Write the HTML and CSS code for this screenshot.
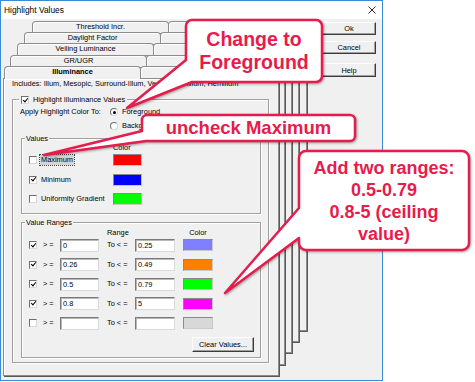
FILE: index.html
```html
<!DOCTYPE html>
<html>
<head>
<meta charset="utf-8">
<title>Highlight Values</title>
<link rel="stylesheet" href="styles.css">
</head>
<body>
<div class="stage">
  <div class="window">
    <div class="titlebar">
      <span class="title">Highlight Values</span>
      <svg class="close" viewBox="0 0 8 8" width="8" height="8"><path d="M0.5 0.5 L7.5 7.5 M7.5 0.5 L0.5 7.5" stroke="#111" stroke-width="0.9" fill="none"/></svg>
    </div>
    <div class="client">
      <div class="notebook">
        <div class="layer l4">
          <div class="tabs"><div class="tab">Threshold Incr.</div><div class="tab"></div></div>
          <div class="panel"></div>
        </div>
        <div class="layer l3">
          <div class="tabs"><div class="tab">Daylight Factor</div><div class="tab"></div></div>
          <div class="panel"></div>
        </div>
        <div class="layer l2">
          <div class="tabs"><div class="tab">Veiling Luminance</div><div class="tab"></div></div>
          <div class="panel"></div>
        </div>
        <div class="layer l1">
          <div class="tabs"><div class="tab">GR/UGR</div><div class="tab"></div></div>
          <div class="panel"></div>
        </div>
        <div class="layer l0">
          <div class="tabs"><div class="tab active">Illuminance</div><div class="tab"></div></div>
          <div class="panel front">
            <div class="includes">Includes: Illum, Mesopic, Surround-Illum, Vertan, Semillum, Hemillum</div>
            <div class="group outer">
              <div class="legend"><span class="cb on"></span><span>Highlight Illuminance Values</span></div>
              <div class="apply">
                <span class="apply-label">Apply Highlight Color To:</span>
                <div class="radios">
                  <div class="ropt"><span class="radio on"></span><span>Foreground</span></div>
                  <div class="ropt"><span class="radio"></span><span>Background</span></div>
                </div>
              </div>
              <div class="group values">
                <div class="glabel">Values</div>
                <div class="color-head">Color</div>
                <div class="vrows">
                  <div class="chk"><span class="cb"></span><span class="focus">Maximum</span></div>
                  <div class="swatch red"></div>
                  <div class="chk"><span class="cb on"></span><span>Minimum</span></div>
                  <div class="swatch blue"></div>
                  <div class="chk"><span class="cb"></span><span>Uniformity Gradient</span></div>
                  <div class="swatch green"></div>
                </div>
              </div>
              <div class="group ranges">
                <div class="glabel">Value Ranges</div>
                <div class="rhead"><span class="rh-range">Range</span><span class="rh-color">Color</span></div>
                <div class="rgrid">
                  <span class="cb on"></span><span class="op">&gt; =</span><div class="field">0</div><span class="op">To &lt; =</span><div class="field wide">0.25</div><div class="swatch sw-r lav"></div>
                  <span class="cb on"></span><span class="op">&gt; =</span><div class="field">0.26</div><span class="op">To &lt; =</span><div class="field wide">0.49</div><div class="swatch sw-r orange"></div>
                  <span class="cb on"></span><span class="op">&gt; =</span><div class="field">0.5</div><span class="op">To &lt; =</span><div class="field wide">0.79</div><div class="swatch sw-r green"></div>
                  <span class="cb on"></span><span class="op">&gt; =</span><div class="field">0.8</div><span class="op">To &lt; =</span><div class="field wide">5</div><div class="swatch sw-r magenta"></div>
                  <span class="cb"></span><span class="op">&gt; =</span><div class="field"></div><span class="op">To &lt; =</span><div class="field wide"></div><div class="swatch sw-r empty"></div>
                </div>
                <div class="btn clear">Clear Values...</div>
              </div>
            </div>
          </div>
        </div>
      </div>
      <div class="buttons">
        <div class="btn side">Ok</div>
        <div class="btn side">Cancel</div>
        <div class="btn side help">Help</div>
      </div>
    </div>
  </div>

  <svg class="callouts" width="475" height="382" viewBox="0 0 475 382">
    <path class="co" d="M192 20 H316 A6 6 0 0 1 322 26 V76 A6 6 0 0 1 316 82 H192 L127 108 L186 60 V26 A6 6 0 0 1 192 20 Z"/>
    <path class="co" d="M147 115 H350 A5 5 0 0 1 355 120 V136 A5 5 0 0 1 350 141 H146 L44 155 L142 131 V120 A5 5 0 0 1 147 115 Z"/>
    <path class="co" d="M306 151 H462 A7 7 0 0 1 469 158 V243 A7 7 0 0 1 462 250 H306 A7 7 0 0 1 299 243 V238 L225 293 L299 208 V158 A7 7 0 0 1 306 151 Z"/>
  </svg>
  <div class="ctext c1">Change to<br>Foreground</div>
  <div class="ctext c2">uncheck Maximum</div>
  <div class="ctext c3">Add two ranges:<br>0.5-0.79<br>0.8-5 (ceiling<br>value)</div>
</div>
</body>
</html>
```

FILE: styles.css
```css
* { box-sizing: border-box; }
html, body { margin: 0; padding: 0; background: #ffffff; }
body {
  font-family: "Liberation Sans", Arial, sans-serif;
  font-size: 7.4px;
  color: #000;
}
.stage { position: relative; width: 475px; height: 382px; overflow: hidden; }

/* window */
.window {
  width: 383px;
  height: 381px;
  border: 1px solid #3b8ad6;
  background: #f0f0f0;
  display: flex;
  flex-direction: column;
}
.titlebar {
  height: 18px;
  flex: none;
  background: #fff;
  display: flex;
  align-items: center;
  justify-content: space-between;
  padding: 0 6px 0 3px;
}
.title { font-size: 8.4px; color: #000; }
.close { display: block; }

.client { display: flex; padding-left: 2px; }
.notebook { position: relative; width: 304px; height: 357px; flex: none; }

/* stacked pages */
.layer {
  position: absolute;
  width: 276px;
  height: 310px;
  display: flex;
  flex-direction: column;
}
.l0 { left: 0; top: 47px; }
.l1 { left: 6px; top: 36px; }
.l2 { left: 13px; top: 24px; }
.l3 { left: 20px; top: 13px; }
.l4 { left: 28px; top: 2px; }

.tabs { display: flex; height: 12px; padding-left: 1px; flex: none; }
.tab {
  width: 137px;
  height: 12px;
  border: 1px solid #8c8c8c;
  border-bottom: none;
  border-radius: 4px 4px 0 0;
  background: #f0f0f0;
  box-shadow: inset 1px 1px 0 #ffffff;
  text-align: center;
  line-height: 10px;
  white-space: nowrap;
}
.tab + .tab { margin-left: -1px; }
.tab.active {
  height: 13px;
  margin-bottom: -1px;
  position: relative;
  z-index: 2;
  font-weight: bold;
}
.panel {
  flex: 1;
  background: #f0f0f0;
  border: 1px solid #8c8c8c;
  box-shadow: 1px 1px 0 #5a5a5a, inset 1px 1px 0 #ffffff;
}
.panel.front { padding: 0 0 0 8px; display: flex; flex-direction: column; align-items: flex-start; }
.includes { line-height: 10px; white-space: nowrap; }

/* group boxes */
.group {
  border: 1px solid #a0a0a0;
  box-shadow: inset 1px 1px 0 #ffffff, 1px 1px 0 #ffffff;
  position: relative;
  flex: none;
}
.outer { margin-top: 10px; width: 257px; height: 264px; display: flex; flex-direction: column; align-items: flex-start; }
.legend {
  position: absolute;
  top: -5px;
  left: 6px;
  padding: 0 2px;
  background: #f0f0f0;
  display: flex;
  align-items: center;
  gap: 4px;
  line-height: 10px;
  white-space: nowrap;
}
.glabel {
  position: absolute;
  top: -5px;
  left: 3px;
  padding: 0 1px;
  background: #f0f0f0;
  line-height: 10px;
  white-space: nowrap;
}
.apply { display: flex; margin-top: 7px; padding-left: 7px; }
.apply-label { width: 90px; line-height: 10px; white-space: nowrap; }
.radios { display: flex; flex-direction: column; gap: 4px; }
.ropt { display: flex; align-items: center; gap: 4px; line-height: 10px; white-space: nowrap; }

/* checkbox / radio */
.cb {
  display: inline-block;
  position: relative;
  width: 8px;
  height: 8px;
  flex: none;
  border: 1px solid;
  border-color: #6e6e6e #d8d8d8 #d8d8d8 #6e6e6e;
  background: #ffffff;
}
.cb.on::after {
  content: "";
  position: absolute;
  left: 1.5px;
  top: -0.5px;
  width: 2px;
  height: 4px;
  border: solid #000;
  border-width: 0 1.3px 1.3px 0;
  transform: rotate(40deg);
}
.radio {
  display: inline-block;
  position: relative;
  width: 8px;
  height: 8px;
  flex: none;
  border-radius: 50%;
  border: 1px solid;
  border-color: #6e6e6e #d8d8d8 #d8d8d8 #6e6e6e;
  background: #ffffff;
}
.radio.on::after {
  content: "";
  position: absolute;
  left: 1.5px;
  top: 1.5px;
  width: 3px;
  height: 3px;
  border-radius: 50%;
  background: #000;
}

/* Values group */
.values { margin: 7px 0 0 8px; width: 240px; height: 76px; padding: 4px 0 0 7px; }
.color-head { margin-left: 84px; line-height: 10px; }
.vrows {
  margin-top: 1px;
  display: grid;
  grid-template-columns: 84px 29px;
  grid-auto-rows: 12px;
  row-gap: 7.5px;
  align-items: center;
}
.chk { display: flex; align-items: center; gap: 4px; line-height: 10px; white-space: nowrap; }
.focus { background: #d4d4d4; outline: 1px dotted #444; padding: 0 1px; margin-left: -1px; }
.swatch {
  width: 29px;
  height: 12px;
  border: 1px solid;
  border-color: #8a8a8a #c8c8c8 #c8c8c8 #8a8a8a;
}
.sw-r { width: 30px; }
.red { background: #ff0000; }
.blue { background: #0000ff; }
.green { background: #00ff00; }
.lav { background: #8080ff; }
.orange { background: #ff8000; }
.magenta { background: #ff00ff; }
.empty { background: #d8d8d8; }

/* Value ranges */
.ranges { margin: 8px 0 0 8px; width: 240px; height: 136px; padding: 5px 0 0 7px; display: flex; flex-direction: column; }
.rhead {
  display: grid;
  grid-template-columns: 14px 17px 47px 28px 48px 30px;
  line-height: 10px;
}
.rh-range { grid-column: 4 / span 2; }
.rh-color { grid-column: 6; text-align: center; }
.rgrid {
  margin-top: 1px;
  display: grid;
  grid-template-columns: 14px 17px 47px 28px 48px 30px;
  grid-auto-rows: 12px;
  row-gap: 7.5px;
  align-items: center;
}
.op { white-space: nowrap; line-height: 10px; }
.field {
  width: 39px;
  height: 13px;
  border: 1px solid;
  border-color: #7a7a7a #dadada #dadada #7a7a7a;
  box-shadow: inset 1px 1px 0 #b8b8b8;
  background: #ffffff;
  padding-left: 2px;
  line-height: 12px;
  white-space: nowrap;
}
.field.wide { width: 40px; }

/* buttons */
.btn {
  border: 1px solid;
  border-color: #ffffff #3c3c3c #3c3c3c #ffffff;
  box-shadow: inset -1px -1px 0 #a0a0a0;
  background: #f0f0f0;
  display: flex;
  align-items: center;
  justify-content: center;
  white-space: nowrap;
}
.clear { align-self: flex-end; margin-top: 8px; margin-right: 6px; width: 62px; height: 15px; }
.buttons { display: flex; flex-direction: column; margin-left: 15px; margin-top: 3px; }
.side { width: 54px; height: 13px; }
.side + .side { margin-top: 6px; }
.side.help { margin-top: 9px; height: 14px; }

/* callouts */
.callouts { position: absolute; left: 0; top: 0; pointer-events: none; }
.co {
  fill: #ffffff;
  stroke: #e61c4c;
  stroke-width: 2.5;
  stroke-linejoin: round;
  filter: drop-shadow(1.5px 1.5px 1.2px rgba(0, 0, 0, 0.35));
}
.ctext {
  position: absolute;
  display: flex;
  align-items: center;
  justify-content: center;
  text-align: center;
  color: #e61c4c;
  font-weight: bold;
  font-family: "Liberation Sans", Arial, sans-serif;
  white-space: nowrap;
}
.c1 { left: 186px; top: 20px; width: 136px; height: 62px; font-size: 19.5px; line-height: 23px; }
.c2 { left: 142px; top: 115px; width: 213px; height: 26px; font-size: 18.5px; line-height: 22px; }
.c3 { left: 299px; top: 151px; width: 170px; height: 99px; font-size: 18px; line-height: 22px; }
```
